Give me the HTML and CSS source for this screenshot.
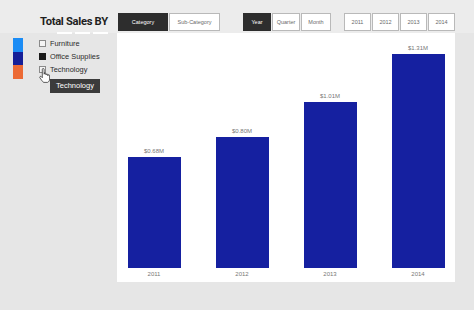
FILE: index.html
```html
<!DOCTYPE html>
<html>
<head>
<meta charset="utf-8">
<link rel="stylesheet" href="styles.css">
</head>
<body>
<div class="page">
  <div class="title-cell">
    <h1 class="title">Total Sales BY</h1>
    <div class="dashes"><span></span><span></span><span></span></div>
  </div>
  <div class="toolbar">
    <div class="seg seg-field">
      <button class="btn on b-cat">Category</button>
      <button class="btn b-sub">Sub-Category</button>
    </div>
    <div class="seg seg-level">
      <button class="btn on b-yr">Year</button>
      <button class="btn b-q">Quarter</button>
      <button class="btn b-m">Month</button>
    </div>
    <div class="seg seg-years">
      <button class="btn b-y">2011</button>
      <button class="btn b-y">2012</button>
      <button class="btn b-y">2013</button>
      <button class="btn b-y">2014</button>
    </div>
  </div>
  <div class="side">
    <div class="swatches">
      <i class="sw sw-furniture"></i>
      <i class="sw sw-office"></i>
      <i class="sw sw-tech"></i>
    </div>
    <ul class="legend">
      <li class="item"><span class="box"></span>Furniture</li>
      <li class="item"><span class="box filled"></span>Office Supplies</li>
      <li class="item hovered">
        <span class="box"></span>Technology
        <svg class="cursor" viewBox="0 0 12 16" width="11" height="15" aria-hidden="true">
          <path d="M3.6 1.4a1 1 0 0 1 2 0v5.2a1 1 0 0 1 2 0v0.8a1 1 0 0 1 2 0v0.8a1 1 0 0 1 2 0v3.6c0 1.8-0.9 3.2-2.3 3.7H5.1c-1-0.6-1.9-1.8-3.1-3.6L1 10.5a1 1 0 0 1 1.5-1.3l1.1 1.2z" fill="#fff" stroke="#222" stroke-width="0.8" stroke-linejoin="round"/>
        </svg>
        <span class="tooltip">Technology</span>
      </li>
    </ul>
  </div>
  <div class="panel">
    <div class="plot">
      <div class="col"><span class="val">$0.68M</span><div class="bar" style="height:111px"></div></div>
      <div class="col"><span class="val">$0.80M</span><div class="bar" style="height:131px"></div></div>
      <div class="col"><span class="val">$1.01M</span><div class="bar" style="height:166px"></div></div>
      <div class="col"><span class="val">$1.31M</span><div class="bar" style="height:214px"></div></div>
    </div>
    <div class="axis">
      <span class="tick">2011</span>
      <span class="tick">2012</span>
      <span class="tick">2013</span>
      <span class="tick">2014</span>
    </div>
  </div>
  <div class="gutter"></div>
  <div class="foot"></div>
</div>
</body>
</html>
```
FILE: styles.css
```css
* { box-sizing: border-box; }
html, body { margin: 0; padding: 0; }
body {
  width: 474px;
  height: 310px;
  overflow: hidden;
  background: #e6e6e6;
  font-family: "Liberation Sans", Arial, sans-serif;
  color: #222;
}
.page {
  display: grid;
  grid-template-columns: 117px 338px 19px;
  grid-template-rows: 33px 249px 28px;
}
.title-cell {
  grid-column: 1;
  grid-row: 1;
  background: #ececec;
  padding: 15px 0 0 40px;
  display: flex;
  flex-direction: column;
}
.title {
  margin: 0;
  font-family: Roboto, "Liberation Sans", sans-serif;
  font-weight: 700;
  font-size: 11.2px;
  line-height: 14px;
  letter-spacing: -0.3px;
  white-space: nowrap;
  color: #1e1e1e;
}
.dashes {
  display: flex;
  gap: 3px;
  margin: 3px 0 0 17px;
}
.dashes span {
  width: 15px;
  height: 2px;
  background: #fff;
}
.toolbar {
  grid-column: 2 / 4;
  grid-row: 1;
  background: #ececec;
  padding: 13px 0 0 1px;
  display: flex;
  align-items: flex-start;
}
.seg { display: flex; gap: 1px; }
.seg-level { margin-left: 23px; }
.seg-years { margin-left: 13px; }
.btn {
  height: 18px;
  margin: 0;
  padding: 0;
  border: 1px solid #b9b9b9;
  background: #fff;
  color: #6a6a6a;
  font-family: "Liberation Sans", Arial, sans-serif;
  font-size: 5.5px;
  line-height: 16px;
  text-align: center;
}
.btn.on {
  background: #2d2d2d;
  border-color: #2d2d2d;
  color: #fff;
}
.b-cat { width: 50px; }
.b-sub { width: 51px; }
.b-yr { width: 28px; }
.b-q { width: 28px; }
.b-m { width: 30px; }
.b-y { width: 27px; }
.side {
  grid-column: 1;
  grid-row: 2;
  display: flex;
  align-items: flex-start;
}
.swatches {
  display: flex;
  flex-direction: column;
  margin: 5px 0 0 13px;
}
.sw { display: block; width: 10px; height: 13.5px; }
.sw-furniture { background: #1b8cf5; }
.sw-office { background: #151f98; }
.sw-tech { background: #ec6a35; }
.legend {
  list-style: none;
  margin: 4px 0 0 16px;
  padding: 0;
}
.item {
  position: relative;
  height: 13px;
  display: flex;
  align-items: center;
  gap: 4px;
  font-size: 7.4px;
  color: #2a2a2a;
  white-space: nowrap;
}
.box {
  width: 7px;
  height: 7px;
  border: 1px solid #8a8a8a;
  background: #f4f4f4;
}
.box.filled { background: #1a1a1a; border-color: #1a1a1a; }
.cursor {
  position: absolute;
  left: 0;
  top: 5px;
}
.tooltip {
  position: absolute;
  left: 11px;
  top: 16px;
  width: 50px;
  height: 14px;
  background: #3b3b3b;
  color: #fff;
  font-size: 7.5px;
  line-height: 14px;
  text-align: center;
}
.panel {
  grid-column: 2;
  grid-row: 2;
  background: #fff;
  display: flex;
  flex-direction: column;
}
.plot {
  flex: 1;
  display: flex;
  justify-content: center;
  align-items: flex-end;
  gap: 35px;
}
.col {
  width: 53px;
  display: flex;
  flex-direction: column;
  align-items: center;
}
.val {
  font-size: 6px;
  line-height: 8px;
  color: #777;
  margin-bottom: 2px;
}
.bar {
  width: 53px;
  background: #1520a0;
}
.axis {
  height: 14px;
  display: flex;
  justify-content: center;
  gap: 35px;
}
.tick {
  width: 53px;
  text-align: center;
  font-size: 6px;
  line-height: 12px;
  color: #777;
}
.gutter { grid-column: 3; grid-row: 2; }
.foot { grid-column: 1 / 4; grid-row: 3; }
```
